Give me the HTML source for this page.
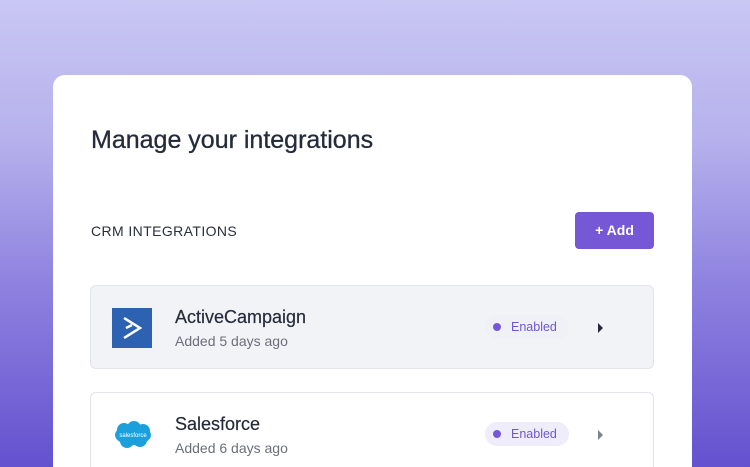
<!DOCTYPE html>
<html><head><style>
html,body{margin:0;padding:0;width:750px;height:467px;overflow:hidden;}
body{background:linear-gradient(180deg,#c9c7f4 0%,#b6b1ec 30%,#8f83e0 60%,#6451cf 100%);font-family:"Liberation Sans",sans-serif;position:relative;}
.card{position:absolute;left:53px;top:75px;width:639px;height:392px;background:#fff;border-radius:12px 12px 0 0;overflow:hidden;}
h1{position:absolute;left:38px;top:51px;margin:0;font-size:25px;font-weight:normal;color:#252b3a;-webkit-text-stroke:0.3px #252b3a;}
.sec{position:absolute;left:38px;top:148px;font-size:14px;color:#2a2f3c;letter-spacing:0.4px;}
.btn{position:absolute;left:522px;top:137px;width:79px;height:37px;background:#7657d6;border-radius:4px;color:#fff;font-size:14px;font-weight:bold;text-align:center;line-height:37px;}
.row{position:absolute;left:37px;width:564px;height:84px;border:1px solid #e4e5ea;border-radius:6px;box-sizing:border-box;}
.r1{top:210px;background:#f2f3f6;}
.r2{top:317px;background:#fff;}
.name{position:absolute;left:84px;top:21px;font-size:18px;color:#252b3a;-webkit-text-stroke:0.2px #252b3a;}
.sub{position:absolute;left:84px;top:47px;font-size:14px;color:#6b6f7a;}
.pill{position:absolute;left:394px;top:29px;width:84px;height:24px;border-radius:12px;background:#efedfb;color:#6f58cf;font-size:12.5px;line-height:24px;}
.r1 .pill{background:#f0f0f7;}
.pill i{position:absolute;left:8px;top:8px;width:8px;height:8px;border-radius:50%;background:#7657d6;}
.pill span{position:absolute;left:26px;}
.arr{position:absolute;left:507px;top:37px;width:0;height:0;border-left:5px solid #252b3a;border-top:5px solid transparent;border-bottom:5px solid transparent;}
.r2 .arr{border-left-color:#7d828c;}
</style></head><body>
<div class="card">
<h1>Manage your integrations</h1>
<div class="sec">CRM INTEGRATIONS</div>
<div class="btn">+ Add</div>
<div class="row r1">
<svg style="position:absolute;left:21px;top:22px" width="40" height="40"><rect width="40" height="40" fill="#2c62b1"/><path d="M12 10 L28 20 L12 30 M14 20 L20 17" stroke="#fff" stroke-width="2.5" fill="none"/></svg>
<div class="name">ActiveCampaign</div><div class="sub">Added 5 days ago</div>
<div class="pill"><i></i><span>Enabled</span></div><div class="arr"></div>
</div>
<div class="row r2">
<svg style="position:absolute;left:21px;top:27px" width="42" height="30"><g fill="#1ca0dc"><ellipse cx="21" cy="15" rx="18" ry="10"/><circle cx="12" cy="10" r="7"/><circle cx="22" cy="8" r="7"/><circle cx="31" cy="11" r="7"/><circle cx="15" cy="21" r="7"/><circle cx="28" cy="20" r="7"/></g><text x="21" y="17" font-size="6" fill="#fff" text-anchor="middle" font-family="Liberation Sans">salesforce</text></svg>
<div class="name">Salesforce</div><div class="sub">Added 6 days ago</div>
<div class="pill"><i></i><span>Enabled</span></div><div class="arr"></div>
</div>
</div>
</body></html>
